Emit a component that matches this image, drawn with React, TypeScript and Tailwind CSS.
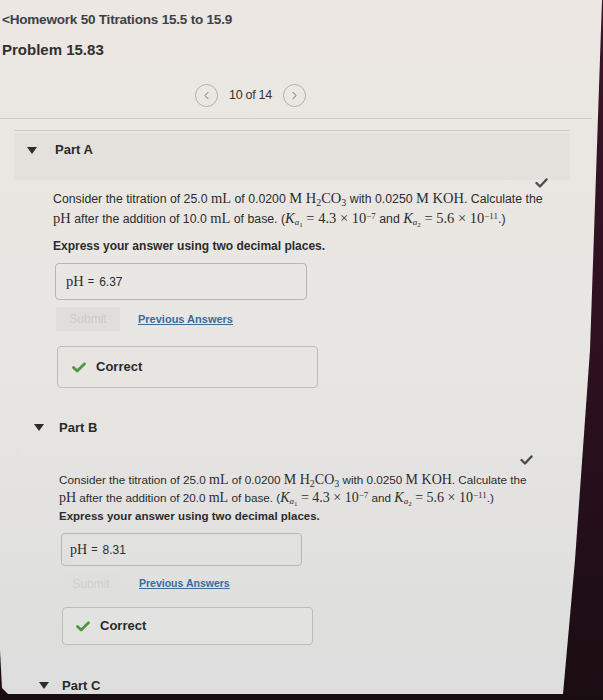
import React from "react";
import { ChevronLeft, ChevronRight } from "lucide-react";

const serif = "font-['Liberation_Serif','DejaVu_Serif',serif]";

function M({ children, size = "a" }: { children: React.ReactNode; size?: "a" | "b" }) {
  return <span className={`${serif} ${size === "a" ? "text-[14.5px]" : "text-[14px]"}`}>{children}</span>;
}

function Tri() {
  return (
    <svg width="10" height="7" viewBox="0 0 10 7">
      <polygon points="0,0 10,0 5,7" fill="#2b2b2b" />
    </svg>
  );
}

function SmallCheck() {
  return (
    <svg width="13" height="10" viewBox="0 0 13 10">
      <path d="M1.5 5 L5 8.5 L11.5 1.5" stroke="#4a4d52" strokeWidth="2.4" fill="none" strokeLinecap="round" strokeLinejoin="round" />
    </svg>
  );
}

function GreenCheck() {
  return (
    <svg width="14" height="11" viewBox="0 0 14 11">
      <path d="M1.5 5.5 L5.2 9 L12.5 1.8" stroke="#4d9a3c" strokeWidth="2.8" fill="none" strokeLinecap="round" strokeLinejoin="round" />
    </svg>
  );
}

function Para({ vol, size }: { vol: string; size: "a" | "b" }) {
  return (
    <>
      <div className="whitespace-nowrap">
        Consider the titration of 25.0 <M size={size}>mL</M> of 0.0200 <M size={size}>M H<sub className="text-[10px]">2</sub>CO<sub className="text-[10px]">3</sub></M> with 0.0250 <M size={size}>M KOH</M>. Calculate the
      </div>
      <div className="whitespace-nowrap">
        <M size={size}>pH</M> after the addition of {vol} <M size={size}>mL</M> of base. (<M size={size}><i>K</i><sub className="text-[9px]"><i>a</i><sub className="text-[7px]">1</sub></sub> = 4.3 × 10<sup className="text-[9px]">−7</sup></M> and <M size={size}><i>K</i><sub className="text-[9px]"><i>a</i><sub className="text-[7px]">2</sub></sub> = 5.6 × 10<sup className="text-[9px]">−11</sup></M>.)
      </div>
    </>
  );
}

export default function App() {
  return (
    <div className="relative w-[603px] h-[700px] overflow-hidden bg-linear-to-b from-[#3a1628] via-[#2d1020] to-[#1a0d12] font-['Liberation_Sans',Arial,sans-serif] text-[#2c2c2c]">
      <div className="h-[700px] w-[603px] bg-linear-to-b from-[#ece7e2] via-[#e8e6e3] to-[#dcdddc] [clip-path:polygon(0_0,602px_0,590px_350px,575px_560px,563px_694px,8px_694px,2px_688px,0_650px)]">
        {/* Header */}
        <div className="pl-[2px] pt-[10px] text-[13.5px] leading-[20px] font-bold text-[#3b4049] tracking-[-0.2px]">
          &lt;Homework 50 Titrations 15.5 to 15.9
        </div>
        <div className="pl-[2px] mt-[10px] text-[15px] leading-[20px] font-bold text-[#303030]">
          Problem 15.83
        </div>

        {/* Pagination */}
        <div className="mt-[23px] flex items-center h-[24px] pl-[195px]">
          <div className="w-[23px] h-[23px] rounded-full border border-[#b3b0ac] flex items-center justify-center">
            <ChevronLeft size={13} color="#6f6f6f" strokeWidth={1.8} />
          </div>
          <div className="ml-[11px] text-[12.5px] text-[#333] tracking-[-0.3px]">10 of 14</div>
          <div className="ml-[11px] w-[23px] h-[23px] rounded-full border border-[#b3b0ac] flex items-center justify-center">
            <ChevronRight size={13} color="#6f6f6f" strokeWidth={1.8} />
          </div>
        </div>

        <div className="mt-[11px] h-px w-[592px] bg-[#cfcbc6]" />
        <div className="mt-[11px] ml-[14px] h-px w-[556px] bg-[#cdcac6]" />

        {/* Part A */}
        <div className="mt-[2px] ml-[14px] w-[556px] h-[47px] bg-[#e4e1dd] flex items-center pl-[13px] pb-[13px]">
          <Tri />
          <span className="ml-[18px] text-[13px] font-bold text-[#2a2a2a]">Part A</span>
        </div>
        <div className="pl-[53px] pr-[58px]">
          <div className="flex justify-end h-[11px] -mt-[2px]">
            <div className="-mr-[3px]"><SmallCheck /></div>
          </div>
          <div className="text-[12.3px] leading-[19px]">
            <Para vol="10.0" size="a" />
          </div>
          <div className="mt-[8px] text-[12px] leading-[18px] font-bold">Express your answer using two decimal places.</div>
          <div className="mt-[8px] ml-[2px] w-[252px] h-[37px] rounded-[4px] border border-[#b9b6b2] flex items-center pl-[10px]">
            <M>pH</M>
            <span className="ml-[4px] text-[11px]">=</span>
            <span className="ml-[5px] text-[12px]">6.37</span>
          </div>
          <div className="mt-[7px] flex items-center">
            <div className="ml-[3px] w-[64px] h-[24px] bg-[#e0dedb] text-[#cdcbc8] text-[12px] flex items-center justify-center">Submit</div>
            <a className="ml-[18px] text-[11px] font-bold text-[#3a6c9e] underline">Previous Answers</a>
          </div>
          <div className="mt-[15px] ml-[4px] w-[261px] h-[42px] rounded-[4px] border border-[#bebbb7] bg-[#e7e4e1] flex items-center pl-[14px]">
            <GreenCheck />
            <span className="ml-[10px] text-[13px] font-bold text-[#2a2a2a]">Correct</span>
          </div>
        </div>

        {/* Part B */}
        <div className="mt-[22px] ml-[20px] w-[560px] h-[47px] bg-[#e5e4e1] flex items-center pl-[14px] pb-[12px]">
          <Tri />
          <span className="ml-[15px] text-[13px] font-bold text-[#2a2a2a]">Part B</span>
        </div>
        <div className="pl-[59px] pr-[60px]">
          <div className="flex justify-end h-[16px] -mt-[2px]">
            <div className="mr-[10px]"><SmallCheck /></div>
          </div>
          <div className="text-[11.7px] leading-[18px]">
            <Para vol="20.0" size="b" />
          </div>
          <div className="text-[11.5px] leading-[18px] font-bold">Express your answer using two decimal places.</div>
          <div className="mt-[8px] ml-[2px] w-[241px] h-[33px] rounded-[4px] border border-[#b9b7b4] flex items-center pl-[8px]">
            <M size="b">pH</M>
            <span className="ml-[4px] text-[11px]">=</span>
            <span className="ml-[5px] text-[12px]">8.31</span>
          </div>
          <div className="mt-[7px] flex items-center">
            <div className="ml-[3px] w-[58px] h-[22px] bg-[#dfdfde] text-[#cfcfce] text-[12px] flex items-center justify-center">Submit</div>
            <a className="ml-[19px] text-[10.5px] font-bold text-[#3a6c9e] underline">Previous Answers</a>
          </div>
          <div className="mt-[12px] ml-[3px] w-[251px] h-[38px] rounded-[4px] border border-[#bcbcbb] bg-[#e2e2e1] flex items-center pl-[13px]">
            <GreenCheck />
            <span className="ml-[10px] text-[13px] font-bold text-[#2a2a2a]">Correct</span>
          </div>
        </div>

        {/* Part C */}
        <div className="mt-[31px] ml-[39px] flex items-center">
          <Tri />
          <span className="ml-[13px] text-[13px] font-bold text-[#2a2a2a]">Part C</span>
        </div>
      </div>
    </div>
  );
}
